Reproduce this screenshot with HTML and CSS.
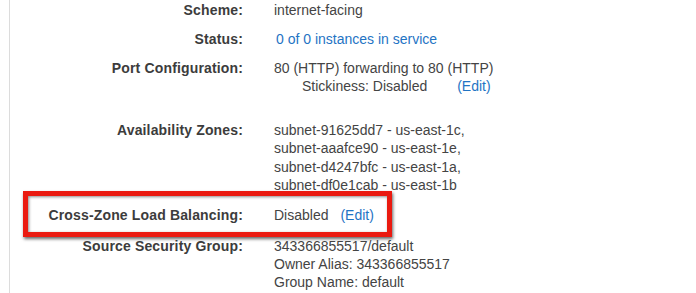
FILE: index.html
```html
<!DOCTYPE html>
<html lang="en">
<head>
    <meta charset="UTF-8">
    <meta name="viewport" content="width=device-width, initial-scale=1.0">
    <title>Load Balancer Description</title>
    <link rel="stylesheet" href="styles.css">
</head>
<body>
    <div class="panel">
        <div class="row first">
            <div class="label">Scheme:</div>
            <div class="value">internet-facing</div>
        </div>
        <div class="row">
            <div class="label">Status:</div>
            <div class="value"><a class="status-link" href="#">0 of 0 instances in service</a></div>
        </div>
        <div class="row spaced">
            <div class="label">Port Configuration:</div>
            <div class="value">
                80 (HTTP) forwarding to 80 (HTTP)
                <div class="sub">Stickiness: Disabled <a class="edit wide" href="#">(Edit)</a></div>
            </div>
        </div>
        <div class="row">
            <div class="label">Availability Zones:</div>
            <div class="value list">
                subnet-91625dd7 - us-east-1c,<br>
                subnet-aaafce90 - us-east-1e,<br>
                subnet-d4247bfc - us-east-1a,<br>
                subnet-df0e1cab - us-east-1b
            </div>
        </div>
        <div class="row highlighted">
            <div class="label">Cross-Zone Load Balancing:</div>
            <div class="value">Disabled <a class="edit" href="#">(Edit)</a></div>
            <div class="callout"></div>
        </div>
        <div class="row group">
            <div class="label">Source Security Group:</div>
            <div class="value list">
                343366855517/default<br>
                Owner Alias: 343366855517<br>
                Group Name: default
            </div>
        </div>
    </div>
</body>
</html>
```

FILE: styles.css
```css
body {
    margin: 0;
    background: #fff;
    font-family: "Liberation Sans", Arial, sans-serif;
    font-size: 14px;
    line-height: 18px;
    color: #444;
    height: 293px;
    overflow: hidden;
}
.panel {
    margin-left: 9px;
    border-left: 1px solid #dcdcdc;
    min-height: 100%;
}
.row {
    display: flex;
    padding: 5px 0 6px;
    position: relative;
}
.row.first {
    padding-top: 1px;
}
.row.spaced {
    margin-bottom: 15px;
}
.row.group {
    margin-top: 2px;
}
.label {
    width: 233px;
    flex-shrink: 0;
    text-align: right;
    font-weight: bold;
    color: #3c3c3c;
    letter-spacing: 0.15px;
}
.value {
    margin-left: 31px;
}
.value.list {
    line-height: 18.4px;
}
a {
    color: #1f74c4;
    text-decoration: none;
}
.status-link {
    padding-left: 2px;
}
.sub {
    padding-left: 28px;
}
.edit {
    margin-left: 8px;
}
.edit.wide {
    margin-left: 26px;
}
/* red annotation box drawn over the row */
.callout {
    position: absolute;
    top: -10px;
    bottom: -7px;
    left: 13px;
    width: 369px;
    box-sizing: border-box;
    border: 5px solid #ea1a10;
    box-shadow: 1px 2px 3px rgba(0, 0, 0, 0.6), inset 1px 1px 3px rgba(0, 0, 0, 0.45);
    pointer-events: none;
}
```
